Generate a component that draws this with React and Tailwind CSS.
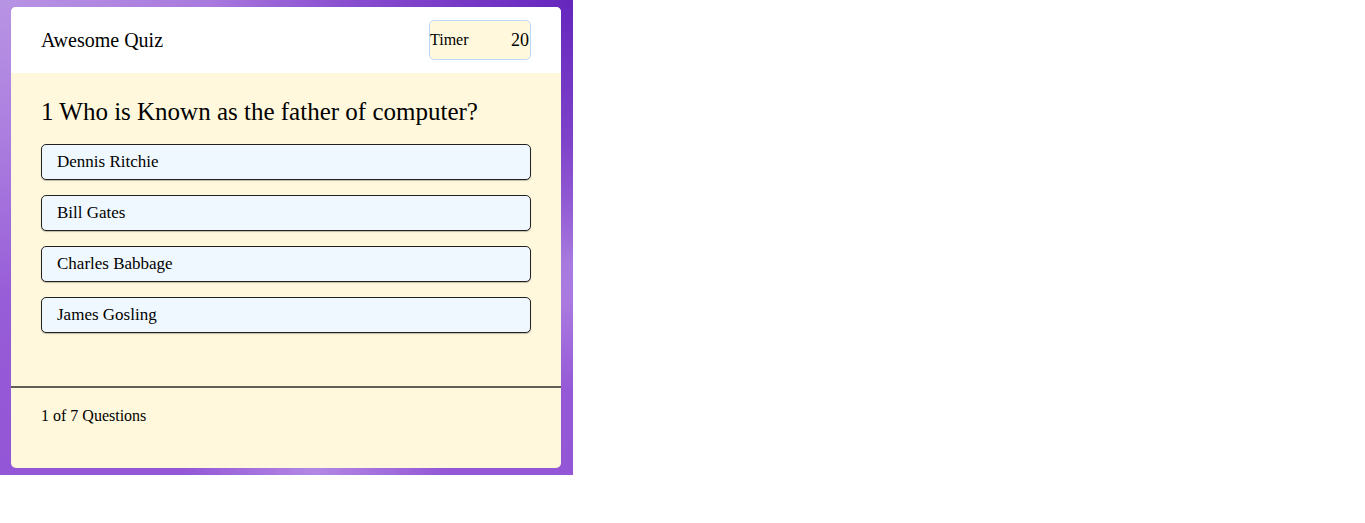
import React from "react";

const options = ["Dennis Ritchie", "Bill Gates", "Charles Babbage", "James Gosling"];

export default function App() {
  return (
    <div className="w-full min-h-[523px] bg-white">
      <div className="w-[573px] h-[475px] pt-[7px] pl-[11px] pr-[12px] bg-[radial-gradient(ellipse_at_100%_0%,#6526bd_0%,rgba(101,38,189,0)_45%),radial-gradient(ellipse_at_0%_0%,#b894e4_0%,rgba(184,148,228,0)_45%),radial-gradient(ellipse_at_100%_55%,#b287e4_0%,rgba(178,135,228,0)_35%),radial-gradient(ellipse_at_55%_100%,#b288e4_0%,rgba(178,136,228,0)_30%),linear-gradient(180deg,#9e66da_0%,#9356d6_100%)]">
        <div className="w-[550px] h-[461px] rounded-[5px] overflow-hidden bg-[#fff8dc] flex flex-col font-['Liberation_Serif','Times_New_Roman',serif] text-black">
          <header className="h-[66px] shrink-0 bg-white flex items-center justify-between pl-[30px] pr-[30px]">
            <div className="text-[20px]">Awesome Quiz</div>
            <div className="w-[102px] h-[40px] rounded-[5px] border border-[#bcd9f7] bg-[#fff8dc] flex items-center justify-between pr-[1px]">
              <span className="text-[16px]">Timer</span>
              <span className="text-[18px]">20</span>
            </div>
          </header>
          <section className="h-[313px] shrink-0 px-[30px] pt-[25px]">
            <h2 className="text-[25px] leading-[28px]">1 Who is Known as the father of computer?</h2>
            <ul className="mt-[18px] flex flex-col gap-[15px]">
              {options.map((o) => (
                <li
                  key={o}
                  className="h-[36px] rounded-[5px] border border-[#222] bg-[#f0f8ff] flex items-center pl-[15px] text-[17px] shadow-[0_1px_1px_rgba(0,0,0,0.25)]"
                >
                  {o}
                </li>
              ))}
            </ul>
          </section>
          <footer className="flex-1 border-t-2 border-[#5f5f55] px-[30px] pt-[18px]">
            <div className="text-[16px] leading-[20px]">1 of 7 Questions</div>
          </footer>
        </div>
      </div>
    </div>
  );
}
